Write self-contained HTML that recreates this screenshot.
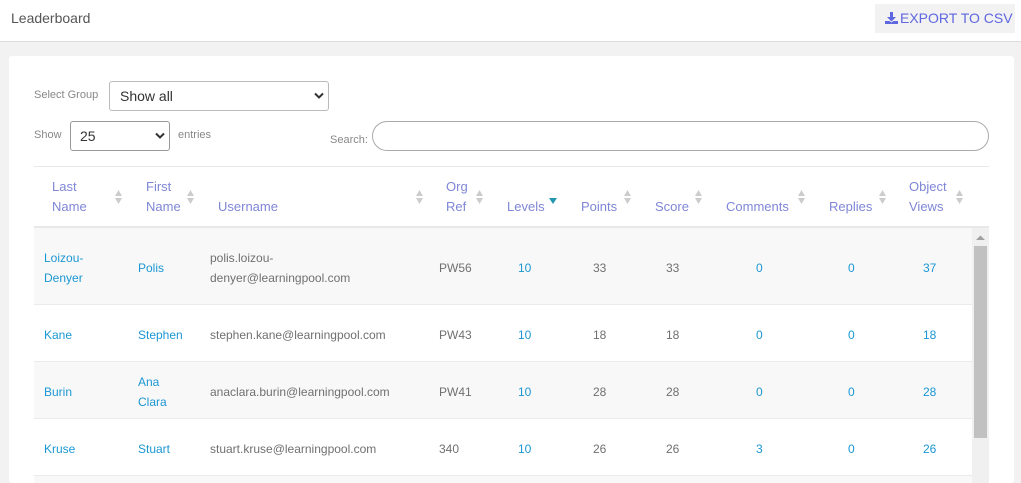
<!DOCTYPE html>
<html style="overflow:hidden;height:483px"><head><style>
*{margin:0;padding:0;box-sizing:border-box}
body{width:1021px;height:483px;overflow:hidden;background:#f2f2f2;font-family:"Liberation Sans",sans-serif;position:relative}
.a{position:absolute;white-space:nowrap}
.hdr{position:absolute;left:0;top:0;width:1021px;height:42px;background:#fff;border-bottom:1px solid #ddd}
.card{position:absolute;left:9px;top:56px;width:1005px;height:427px;background:#fff;border-radius:3px}
.h{color:#7f86d6;font-size:13px;line-height:20px}
.l{color:#1b97d3;font-size:12px;line-height:20px}
.g{color:#707070;font-size:12px;line-height:20px}
.row{position:absolute;left:34px;width:938px}
</style></head><body>
<div class="hdr"></div>
<div class="a" style="left:11px;top:10px;font-size:14px;color:#555">Leaderboard</div>
<div class="a" style="left:875px;top:4px;width:140px;height:29px;background:#f2f2f2"></div>
<svg class="a" style="left:885px;top:12px" width="13" height="12" viewBox="0 0 13 12"><path d="M5 0h3v5h3l-4.5 4.5L2 5h3z M0 9h4.5l2 1.5 2-1.5H13v3H0z" fill="#5e66e0"/></svg>
<div class="a" style="left:900px;top:10px;font-size:14px;color:#5e66e0">EXPORT TO CSV</div>
<div class="card"></div>
<div class="a" style="left:34px;top:89px;font-size:11px;color:#888">Select Group</div>
<div class="a" style="left:109px;top:81px;width:220px;height:30px;border:1px solid #bbb;border-radius:3px;font-size:14px;color:#333;padding:6px 10px">Show all</div>
<svg class="a" style="left:314px;top:92px" width="10" height="8"><path d="M1 1.5l4 4 4-4" stroke="#333" stroke-width="2" fill="none"/></svg>
<div class="a" style="left:34px;top:129px;font-size:11px;color:#888">Show</div>
<div class="a" style="left:70px;top:121px;width:100px;height:30px;border:1px solid #999;border-radius:3px;font-size:14px;color:#333;padding:6px 9px">25</div>
<svg class="a" style="left:155px;top:132px" width="10" height="8"><path d="M1 1.5l4 4 4-4" stroke="#333" stroke-width="2" fill="none"/></svg>
<div class="a" style="left:178px;top:129px;font-size:11px;color:#888">entries</div>
<div class="a" style="left:330px;top:134px;font-size:11px;color:#888">Search:</div>
<div class="a" style="left:372px;top:121px;width:617px;height:30px;border:1px solid #aaa;border-radius:15px"></div>
<div class="a" style="left:34px;top:166px;width:955px;height:1px;background:#e8e8e8"></div>
<div class="a" style="left:34px;top:226px;width:955px;height:2px;background:#e8e8e8"></div>

<div class="a h" style="left:52px;top:177px">Last<br>Name</div>
<div class="a h" style="left:146px;top:177px">First<br>Name</div>
<div class="a h" style="left:218px;top:197px">Username</div>
<div class="a h" style="left:446px;top:177px">Org<br>Ref</div>
<div class="a h" style="left:507px;top:197px">Levels</div>
<div class="a h" style="left:581px;top:197px">Points</div>
<div class="a h" style="left:655px;top:197px">Score</div>
<div class="a h" style="left:726px;top:197px">Comments</div>
<div class="a h" style="left:829px;top:197px">Replies</div>
<div class="a h" style="left:909px;top:177px">Object<br>Views</div>
<svg class="a" style="left:0;top:0" width="1021" height="483">
<g fill="#ccc">
<path d="M115 196l3.5-6 3.5 6zM115 198l3.5 6 3.5-6z"/>
<path d="M187 196l3.5-6 3.5 6zM187 198l3.5 6 3.5-6z"/>
<path d="M416 196l3.5-6 3.5 6zM416 198l3.5 6 3.5-6z"/>
<path d="M476 196l3.5-6 3.5 6zM476 198l3.5 6 3.5-6z"/>
<path d="M624 196l3.5-6 3.5 6zM624 198l3.5 6 3.5-6z"/>
<path d="M695 196l3.5-6 3.5 6zM695 198l3.5 6 3.5-6z"/>
<path d="M798 196l3.5-6 3.5 6zM798 198l3.5 6 3.5-6z"/>
<path d="M879 196l3.5-6 3.5 6zM879 198l3.5 6 3.5-6z"/>
<path d="M956 196l3.5-6 3.5 6zM956 198l3.5 6 3.5-6z"/>
</g>
<path d="M549 198h8l-4 6z" fill="#2596b0"/>
</svg>

<div class="row" style="top:228px;height:77px;background:#f8f8f8;border-bottom:1px solid #ebebeb"></div>
<div class="row" style="top:305px;height:57px;background:#fff;border-bottom:1px solid #ebebeb"></div>
<div class="row" style="top:362px;height:57px;background:#f8f8f8;border-bottom:1px solid #ebebeb"></div>
<div class="row" style="top:419px;height:57px;background:#fff;border-bottom:1px solid #ebebeb"></div>
<div class="row" style="top:476px;height:7px;background:#f8f8f8"></div>
<div class="a" style="left:972px;top:228px;width:17px;height:255px;background:#f0f0f0"></div>
<div class="a" style="left:974px;top:246px;width:13px;height:192px;background:#c1c1c1"></div>
<svg class="a" style="left:976px;top:235px" width="9" height="6"><path d="M0 5l4.5-4.5L9 5z" fill="#a0a0a0"/></svg>

<div class="a l" style="left:44px;top:248px">Loizou-<br>Denyer</div>
<div class="a l" style="left:138px;top:258px">Polis</div>
<div class="a g" style="left:210px;top:248px">polis.loizou-<br>denyer@learningpool.com</div>
<div class="a g" style="left:439px;top:258px">PW56</div>
<div class="a l" style="left:518px;top:258px">10</div>
<div class="a g" style="left:593px;top:258px">33</div>
<div class="a g" style="left:666px;top:258px">33</div>
<div class="a l" style="left:756px;top:258px">0</div>
<div class="a l" style="left:848px;top:258px">0</div>
<div class="a l" style="left:923px;top:258px">37</div>

<div class="a l" style="left:44px;top:325px">Kane</div>
<div class="a l" style="left:138px;top:325px">Stephen</div>
<div class="a g" style="left:210px;top:325px">stephen.kane@learningpool.com</div>
<div class="a g" style="left:439px;top:325px">PW43</div>
<div class="a l" style="left:518px;top:325px">10</div>
<div class="a g" style="left:593px;top:325px">18</div>
<div class="a g" style="left:666px;top:325px">18</div>
<div class="a l" style="left:756px;top:325px">0</div>
<div class="a l" style="left:848px;top:325px">0</div>
<div class="a l" style="left:923px;top:325px">18</div>

<div class="a l" style="left:44px;top:382px">Burin</div>
<div class="a l" style="left:138px;top:372px">Ana<br>Clara</div>
<div class="a g" style="left:210px;top:382px">anaclara.burin@learningpool.com</div>
<div class="a g" style="left:439px;top:382px">PW41</div>
<div class="a l" style="left:518px;top:382px">10</div>
<div class="a g" style="left:593px;top:382px">28</div>
<div class="a g" style="left:666px;top:382px">28</div>
<div class="a l" style="left:756px;top:382px">0</div>
<div class="a l" style="left:848px;top:382px">0</div>
<div class="a l" style="left:923px;top:382px">28</div>

<div class="a l" style="left:44px;top:439px">Kruse</div>
<div class="a l" style="left:138px;top:439px">Stuart</div>
<div class="a g" style="left:210px;top:439px">stuart.kruse@learningpool.com</div>
<div class="a g" style="left:439px;top:439px">340</div>
<div class="a l" style="left:518px;top:439px">10</div>
<div class="a g" style="left:593px;top:439px">26</div>
<div class="a g" style="left:666px;top:439px">26</div>
<div class="a l" style="left:756px;top:439px">3</div>
<div class="a l" style="left:848px;top:439px">0</div>
<div class="a l" style="left:923px;top:439px">26</div>
</body></html>
